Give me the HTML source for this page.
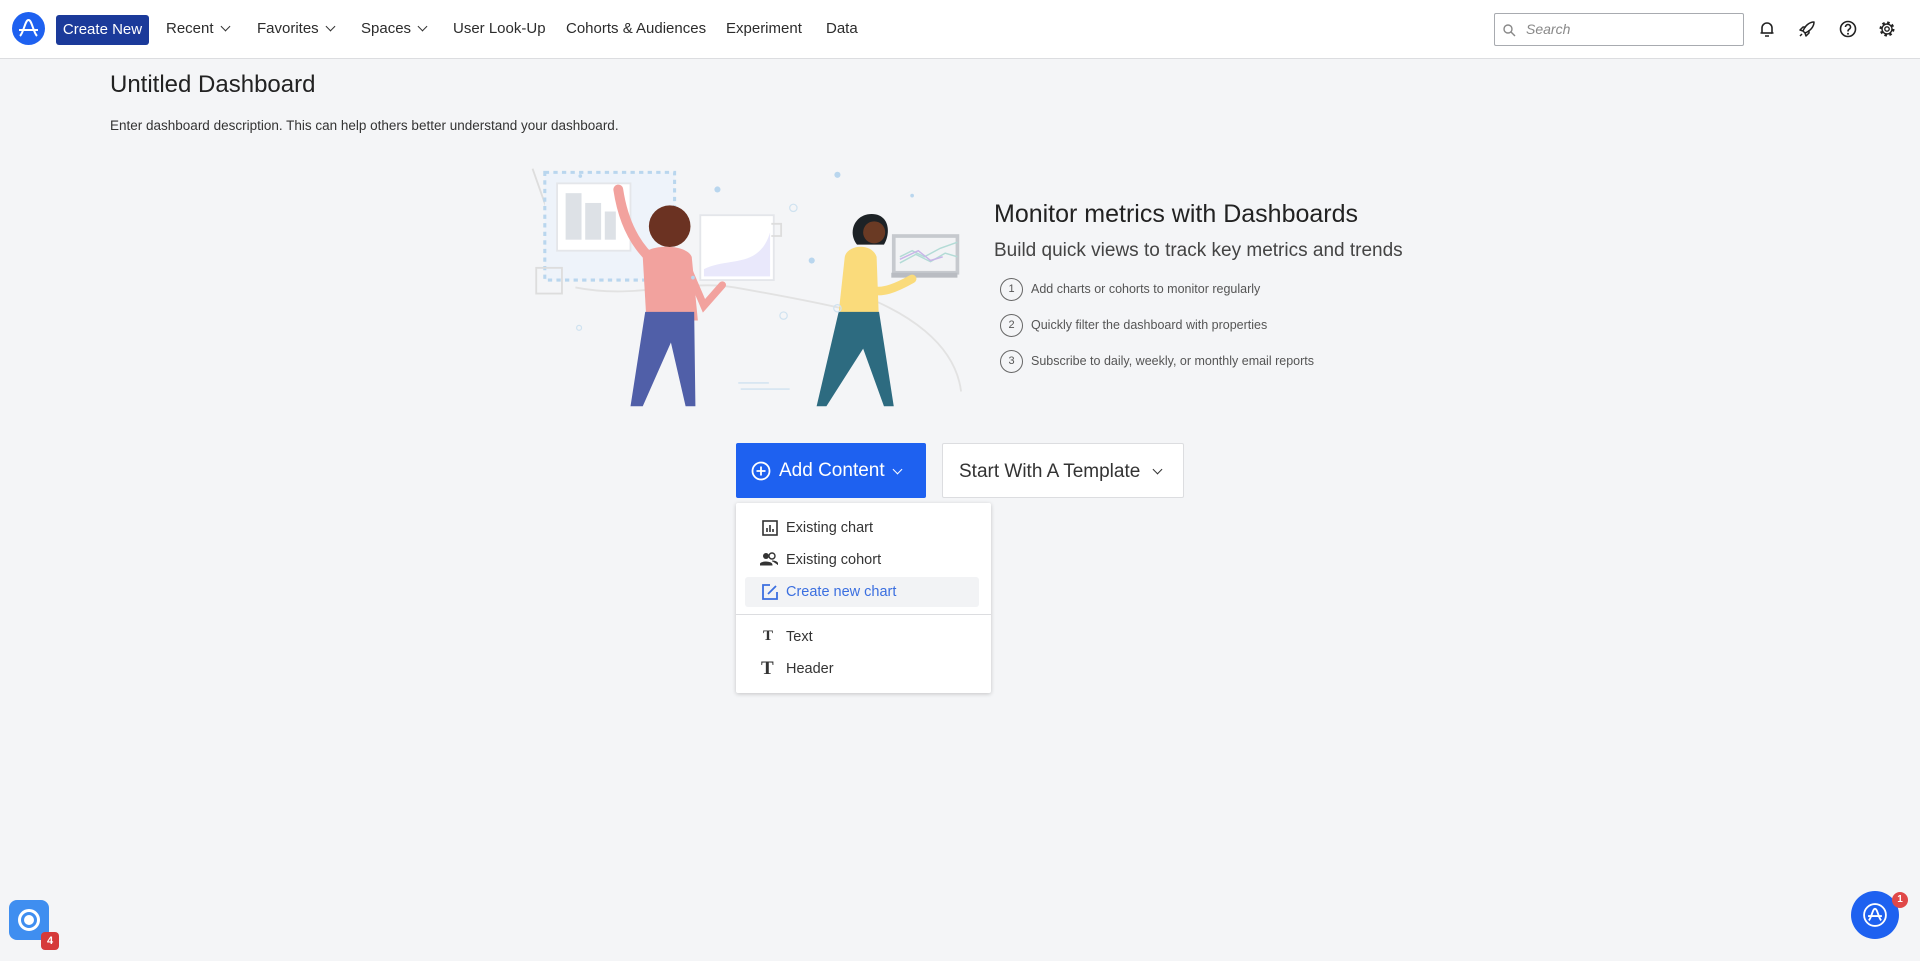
<!DOCTYPE html>
<html><head><meta charset="utf-8"><style>
*{box-sizing:border-box;margin:0;padding:0}
body{width:1920px;height:961px;background:#f4f5f7;font-family:"Liberation Sans",sans-serif;color:#2b2b2b;position:relative;overflow:hidden}
.nav{position:absolute;left:0;top:0;width:1920px;height:59px;background:#fff;border-bottom:1px solid #dcdde0}
.ab{position:absolute;font-size:15px;color:#2c2c2c;top:20px}
.chev{display:inline-block;width:7px;height:7px;border-right:1.6px solid #333;border-bottom:1.6px solid #333;transform:rotate(45deg);margin-left:8px;position:relative;top:-3px}
.t{position:absolute;white-space:nowrap}
.menu{position:absolute;left:736px;top:503px;width:255px;height:190px;background:#fff;box-shadow:0 1px 4px rgba(0,0,0,.2);border-radius:2px}
.mi{position:absolute;left:50px;font-size:14.5px;color:#333}
</style></head><body>
<div class="nav">
 <svg style="position:absolute;left:12px;top:12px" width="33" height="33" viewBox="0 0 33 33"><circle cx="16.5" cy="16.5" r="16.5" fill="#1e61f0"/><path d="M8 24 C12 20 13 8 16.5 8 C20 8 21 20 25 24 M7 18 H26" stroke="#fff" stroke-width="2" fill="none"/></svg>
 <div style="position:absolute;left:56px;top:15px;width:93px;height:30px;background:#1b3a9a;border-radius:3px;color:#fff;font-size:15px;text-align:center;line-height:30px">Create New</div>
 <div class="ab" style="left:166px">Recent<span class="chev"></span></div>
 <div class="ab" style="left:257px">Favorites<span class="chev"></span></div>
 <div class="ab" style="left:361px">Spaces<span class="chev"></span></div>
 <div class="ab" style="left:453px">User Look-Up</div>
 <div class="ab" style="left:566px">Cohorts &amp; Audiences</div>
 <div class="ab" style="left:726px">Experiment</div>
 <div class="ab" style="left:826px">Data</div>
 <div style="position:absolute;left:1494px;top:13px;width:250px;height:33px;border:1px solid #a8abb0;border-radius:2px">
  <svg style="position:absolute;left:8px;top:10px" width="13" height="13"><circle cx="5" cy="5" r="4" stroke="#888" stroke-width="1.4" fill="none"/><path d="M8 8 L12 12" stroke="#888" stroke-width="1.4"/></svg>
  <span style="position:absolute;left:31px;top:7px;font-size:14px;font-style:italic;color:#888">Search</span></div>
 <svg style="position:absolute;left:1759px;top:20px" width="16" height="18" viewBox="0 0 16 18"><path d="M3 13 V8 a5 5 0 0 1 10 0 V13 H14.5 M1.5 13 H3 M6 16 H10" stroke="#222" stroke-width="1.6" fill="none"/><path d="M3 13H13" stroke="#222" stroke-width="1.6"/></svg>
 <svg style="position:absolute;left:1798px;top:20px" width="18" height="18" viewBox="0 0 18 18"><path d="M16 2 C11 2 7 6 5 11 L7 13 C12 11 16 7 16 2Z M5 11 L2 10 L5 7 H8 M7 13 L8 16 L11 13 V10 M2 16 L4 14" stroke="#222" stroke-width="1.5" fill="none" stroke-linejoin="round"/></svg>
 <svg style="position:absolute;left:1839px;top:20px" width="18" height="18" viewBox="0 0 18 18"><circle cx="9" cy="9" r="7.5" stroke="#222" stroke-width="1.6" fill="none"/><path d="M6.5 7 a2.5 2.5 0 1 1 3.5 2.3 C9 10 9 10.5 9 11.5" stroke="#222" stroke-width="1.6" fill="none"/><circle cx="9" cy="13.7" r="1" fill="#222"/></svg>
 <svg style="position:absolute;left:1878px;top:20px" width="18" height="18" viewBox="0 0 18 18"><circle cx="9" cy="9" r="6" stroke="#222" stroke-width="3" stroke-dasharray="2.4 2.3" fill="none"/><circle cx="9" cy="9" r="5" stroke="#222" stroke-width="1.4" fill="none"/><circle cx="9" cy="9" r="2.2" stroke="#222" stroke-width="1.4" fill="none"/></svg>
</div>
<div class="t" style="left:110px;top:71px;font-size:24px;color:#222">Untitled Dashboard</div>
<div class="t" style="left:110px;top:118px;font-size:13.5px;color:#333">Enter dashboard description. This can help others better understand your dashboard.</div>

<svg style="position:absolute;left:530px;top:165px" width="441" height="251" viewBox="433 135 360 205">
 <path d="M435 138 L447 172" stroke="#ddd" stroke-width="1.5" fill="none"/>
 <rect x="445" y="141" width="106" height="88" fill="#eef3fa" stroke="#b9d6ee" stroke-width="2.5" stroke-dasharray="3.5 3.5"/>
 <rect x="455" y="150" width="60" height="55" fill="#fff" stroke="#e4e6ea" stroke-width="1.5"/>
 <rect x="462" y="158" width="13" height="38" fill="#dde1e6"/><rect x="478" y="166" width="13" height="30" fill="#dde1e6"/><rect x="494" y="173" width="9" height="23" fill="#dde1e6"/>
 <rect x="438" y="219" width="21" height="21" fill="none" stroke="#ddd" stroke-width="1.5"/>
 <path d="M470 235 C520 245 560 228 600 235 C640 242 680 250 700 255" stroke="#e2e2e2" stroke-width="1.5" fill="none"/>
 <path d="M700 240 C740 255 780 280 785 320" stroke="#e2e2e2" stroke-width="1.5" fill="none"/>
 <rect x="572" y="176" width="60" height="53" fill="#fff" stroke="#e4e6ea" stroke-width="1.5"/>
 <path d="M575 226 L575 220 C595 210 620 220 629 190 V226Z" fill="#e9e8fb"/>
 <path d="M630 183 h8 v10 h-8" fill="none" stroke="#ddd" stroke-width="1.5"/>
 <path d="M505 155 C508 175 515 195 530 210" stroke="#f2a29e" stroke-width="8" fill="none" stroke-linecap="round"/>
 <path d="M560 215 L575 250 L590 233" stroke="#f2a29e" stroke-width="6" fill="none" stroke-linecap="round"/>
 <path d="M525 210 C525 200 560 198 565 210 L570 262 H528Z" fill="#f2a29e"/>
 <circle cx="547" cy="185" r="17" fill="#6b3222"/>
 <path d="M527 255 H567 L568 332 H560 L548 280 L525 332 H515Z" fill="#505fa8"/>
 <rect x="730" y="193" width="52" height="30" fill="#f2f3f5" stroke="#c6c9ce" stroke-width="3"/>
 <path d="M735 210 L745 205 L755 210 L768 203 L782 198 M735 215 L748 208 L760 214 L772 207 L782 210" stroke="#b3dbd6" stroke-width="1.2" fill="none"/>
 <path d="M735 212 L750 205 L760 213 L770 210" stroke="#c8b5e8" stroke-width="1.2" fill="none"/>
 <rect x="728" y="223" width="54" height="4" fill="#b9bcc2"/>
 <path d="M700 215 C705 240 715 245 745 228" stroke="#fadb7b" stroke-width="7" fill="none" stroke-linecap="round"/>
 <path d="M690 210 C692 200 712 198 716 210 L718 265 H684Z" fill="#fadb7b"/>
 <path d="M700 200 C692 190 698 175 712 175 C726 175 728 190 722 200Z" fill="#1d2226"/><circle cx="714" cy="190" r="9" fill="#6a3a24"/>
 <path d="M685 255 H718 L730 332 H722 L705 285 L675 332 H667Z" fill="#2d6b80"/>
 <circle cx="474" cy="144" r="1.5" fill="#b9d6ee"/><circle cx="586" cy="155" r="2.5" fill="#b9d6ee"/><circle cx="684" cy="143" r="2.5" fill="#b9d6ee"/><circle cx="745" cy="160" r="1.5" fill="#b9d6ee"/><circle cx="663" cy="213" r="2.5" fill="#b9d6ee"/><circle cx="566" cy="227" r="1.5" fill="#b9d6ee"/>
 <circle cx="648" cy="170" r="3" fill="none" stroke="#cfe2f0"/><circle cx="684" cy="252" r="3" fill="none" stroke="#cfe2f0"/><circle cx="640" cy="258" r="3" fill="none" stroke="#cfe2f0"/><circle cx="473" cy="268" r="2" fill="none" stroke="#cfe2f0"/>
 <path d="M603 313 H628 M605 318 H645" stroke="#cfe2f0" stroke-width="1.2"/>
</svg>

<div class="t" style="left:994px;top:200px;font-size:25px;color:#222">Monitor metrics with Dashboards</div>
<div class="t" style="left:994px;top:240px;font-size:19px;color:#444">Build quick views to track key metrics and trends</div>
<div style="position:absolute;left:1000px;top:278px;width:23px;height:23px;border:1.3px solid #666;border-radius:50%;font-size:11px;text-align:center;line-height:21px;color:#555">1</div>
<div class="t" style="left:1031px;top:282px;font-size:12.5px;color:#555">Add charts or cohorts to monitor regularly</div>
<div style="position:absolute;left:1000px;top:314px;width:23px;height:23px;border:1.3px solid #666;border-radius:50%;font-size:11px;text-align:center;line-height:21px;color:#555">2</div>
<div class="t" style="left:1031px;top:318px;font-size:12.5px;color:#555">Quickly filter the dashboard with properties</div>
<div style="position:absolute;left:1000px;top:350px;width:23px;height:23px;border:1.3px solid #666;border-radius:50%;font-size:11px;text-align:center;line-height:21px;color:#555">3</div>
<div class="t" style="left:1031px;top:354px;font-size:12.5px;color:#555">Subscribe to daily, weekly, or monthly email reports</div>

<div style="position:absolute;left:736px;top:443px;width:190px;height:55px;background:#1e61f0;border-radius:2px;color:#fff">
 <svg style="position:absolute;left:15px;top:18px" width="20" height="20"><circle cx="10" cy="10" r="8.5" stroke="#fff" stroke-width="1.8" fill="none"/><path d="M10 5.5V14.5M5.5 10H14.5" stroke="#fff" stroke-width="1.8"/></svg>
 <span style="position:absolute;left:43px;top:17px;font-size:19px">Add Content</span>
 <span class="chev" style="position:absolute;left:158px;top:23px;border-color:#fff;margin:0"></span></div>
<div style="position:absolute;left:942px;top:443px;width:242px;height:55px;background:#fff;border:1px solid #dcdde0;border-radius:2px">
 <span style="position:absolute;left:16px;top:17px;font-size:19px;color:#333">Start With A Template</span>
 <span class="chev" style="position:absolute;left:211px;top:22px;margin:0"></span></div>

<div class="menu">
 <svg style="position:absolute;left:26px;top:17px" width="16" height="16"><rect x="1" y="1" width="14" height="14" stroke="#333" stroke-width="1.6" fill="none"/><path d="M5 12V8M8 12V5M11 12V9" stroke="#333" stroke-width="1.6"/></svg>
 <div class="mi" style="top:17px">Existing chart</div>
 <svg style="position:absolute;left:24px;top:49px" width="18" height="14"><circle cx="6" cy="4" r="3" fill="#333"/><circle cx="12" cy="4" r="3" fill="none" stroke="#333" stroke-width="1.4"/><path d="M0 13c0-4 12-4 12 0ZM12 9c3 0 6 1 6 4" fill="#333" stroke="#333" stroke-width="1"/></svg>
 <div class="mi" style="top:49px">Existing cohort</div>
 <div style="position:absolute;left:9px;top:74px;width:234px;height:30px;background:#f2f3f5;border-radius:3px"></div>
 <svg style="position:absolute;left:26px;top:81px" width="16" height="16"><path d="M8 1H1V15H15V8" stroke="#3b6fe0" stroke-width="1.8" fill="none"/><path d="M6 10L14 2" stroke="#3b6fe0" stroke-width="1.8"/></svg>
 <div class="mi" style="top:81px;color:#3b6fe0">Create new chart</div>
 <div style="position:absolute;left:0;top:111px;width:255px;height:1px;background:#dcdde0"></div>
 <div style="position:absolute;left:27px;top:125px;font-family:'Liberation Serif',serif;font-weight:bold;font-size:15px;color:#333">T</div>
 <div class="mi" style="top:126px">Text</div>
 <div style="position:absolute;left:25px;top:155px;font-family:'Liberation Serif',serif;font-weight:bold;font-size:19px;color:#333">T</div>
 <div class="mi" style="top:158px">Header</div>
</div>

<div style="position:absolute;left:9px;top:900px;width:40px;height:40px;border-radius:8px;background:#3f8ef0"><div style="position:absolute;left:9px;top:9px;width:22px;height:22px;border:3px solid #fff;border-radius:50%"></div><div style="position:absolute;left:15px;top:15px;width:10px;height:10px;background:#fff;border-radius:50%"></div></div>
<div style="position:absolute;left:41px;top:932px;width:18px;height:18px;border-radius:4px;background:#d63a3a;color:#fff;font-size:11px;font-weight:bold;text-align:center;line-height:18px">4</div>
<div style="position:absolute;left:1851px;top:891px;width:48px;height:48px;border-radius:50%;background:#1e61f0"><svg style="position:absolute;left:12px;top:12px" width="24" height="24" viewBox="0 0 33 33"><circle cx="16.5" cy="16.5" r="15" stroke="#fff" stroke-width="2.5" fill="none"/><path d="M8 24 C12 20 13 8 16.5 8 C20 8 21 20 25 24 M7 18 H26" stroke="#fff" stroke-width="2.5" fill="none"/></svg></div>
<div style="position:absolute;left:1892px;top:892px;width:16px;height:16px;border-radius:50%;background:#e04848;color:#fff;font-size:10px;font-weight:bold;text-align:center;line-height:16px">1</div>
</body></html>
